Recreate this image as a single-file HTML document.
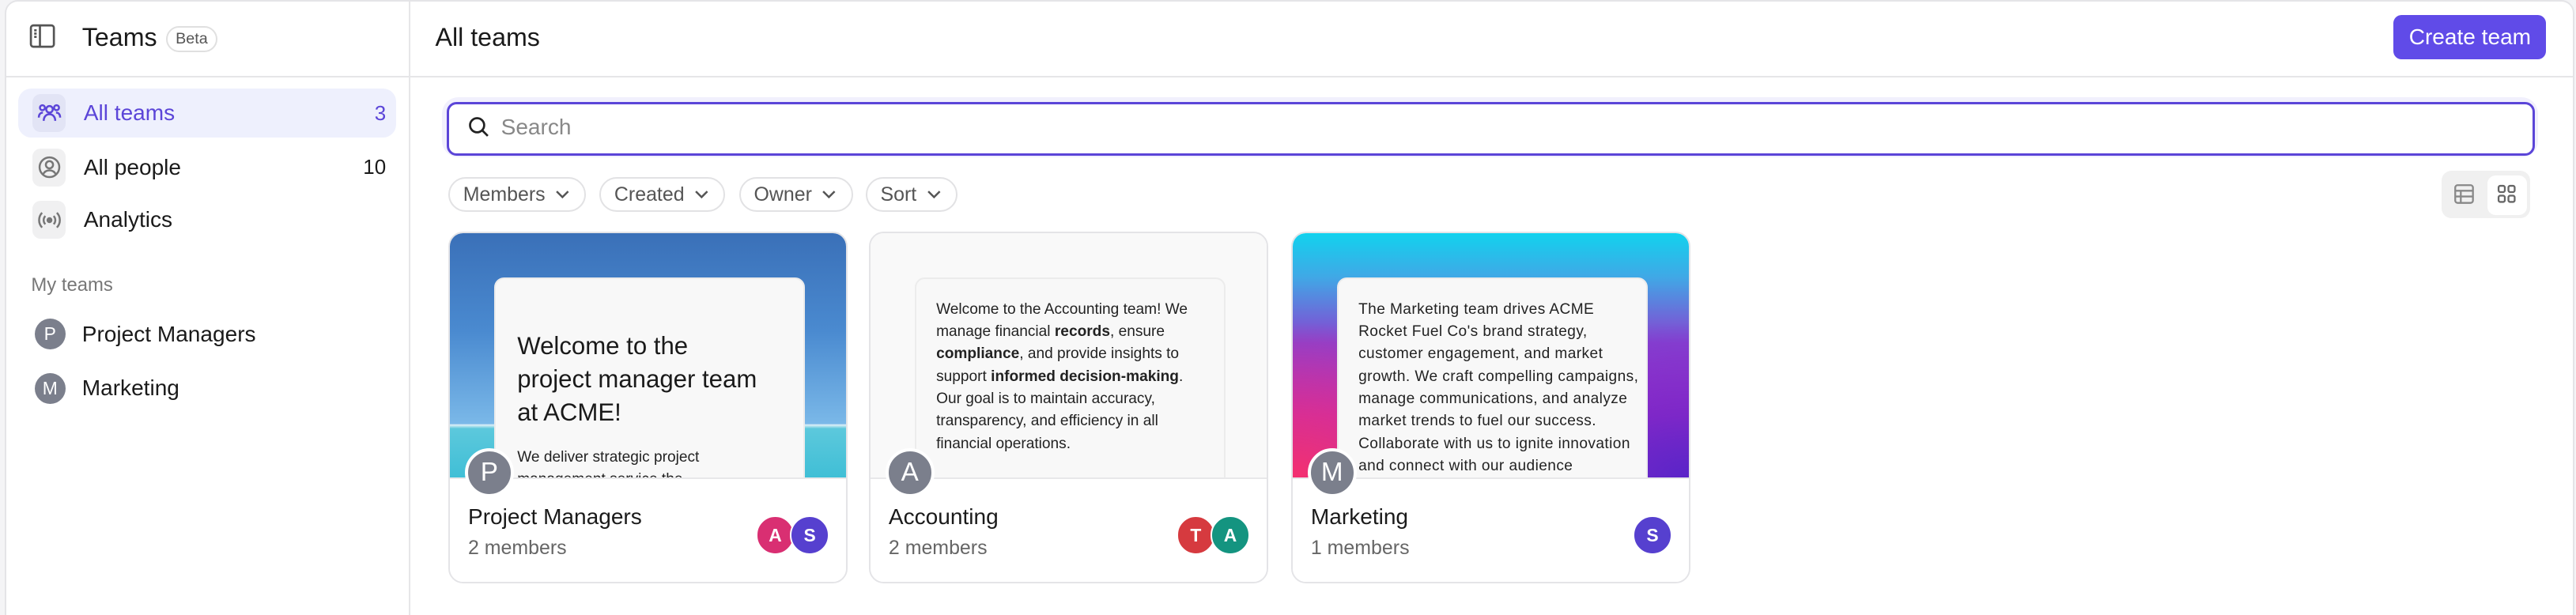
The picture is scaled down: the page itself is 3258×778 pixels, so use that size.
<!DOCTYPE html>
<html><head><meta charset="utf-8"><style>
html,body{margin:0;padding:0;background:#f4f4f6;overflow:hidden}
body{width:3258px;height:778px}
#w{zoom:2.0778;width:1568px;height:375px;position:relative;font-family:"Liberation Sans",sans-serif;color:#1a1a1a}
.frame{position:absolute;left:3px;top:0;width:1562px;height:380px;background:#fff;border:1px solid #e4e4e7;border-radius:8px;overflow:hidden}
.abs{position:absolute}
.hline{position:absolute;left:0;right:0;top:45px;height:1px;background:#e6e6e8}
.vline{position:absolute;left:245px;top:0;bottom:0;width:1px;background:#e6e6e8}
.nav{position:absolute;left:7px;width:230px;height:30px;border-radius:8px;display:flex;align-items:center;font-size:13.5px}
.nav .ic{width:20px;height:23px;border-radius:5px;background:#f0f0f1;margin-left:9px;margin-right:11px;display:flex;align-items:center;justify-content:center}
.nav .n{position:absolute;right:6px;font-size:12.5px}
.my{position:absolute;left:15px;display:flex;align-items:center;font-size:13.5px}
.av{border-radius:50%;background:#7b7f8c;color:#fff;display:flex;align-items:center;justify-content:center;font-size:11px}
.chip{position:absolute;top:107px;height:21px;border:1px solid #e2e2e4;border-radius:11px;font-size:12px;color:#555;display:flex;align-items:center;padding:0 9px 0 8px;box-sizing:border-box}
.chip svg{margin-left:6px}
.card{position:absolute;top:140px;width:243px;height:214px;border:1px solid #e4e4e7;border-radius:9px;overflow:hidden;background:#fff;box-sizing:border-box}
.img{position:absolute;left:0;top:0;right:0;height:149px;overflow:hidden}
.panel{position:absolute;top:27px;width:189px;height:140px;background:#f8f8f8;border-radius:6px;border:1px solid #ececec;box-sizing:border-box}
.bot{position:absolute;left:0;right:0;top:149px;bottom:0;border-top:1px solid #e8e8ea;background:#fff}
.big{position:absolute;left:9px;top:131px;width:26px;height:26px;border:2px solid #fff;font-size:16px}
.title{position:absolute;left:11px;top:165px;font-size:13.5px}
.sub{position:absolute;left:11px;top:185px;font-size:12px;color:#666}
.sm{position:absolute;top:172px;width:22px;height:22px;font-size:11px;font-weight:bold;border:1px solid #fff}
.pt{font-size:9.2px;line-height:13.6px;color:#222;position:absolute;left:12px;top:12px;right:8px}
</style></head><body><div id="w">
<div class="frame">
<div class="hline"></div><div class="vline"></div>
<svg class="abs" style="left:14px;top:13px" width="16" height="16" viewBox="0 0 16 16" fill="none" stroke="#555" stroke-width="1.3"><rect x="1" y="1.5" width="14" height="13" rx="1.5"/><line x1="6.5" y1="1.5" x2="6.5" y2="14.5"/><line x1="3" y1="4.5" x2="4.5" y2="4.5"/><line x1="3" y1="6.5" x2="4.5" y2="6.5"/><line x1="3" y1="8.5" x2="4.5" y2="8.5"/></svg>
<div class="abs" style="left:46px;top:13px;font-size:15.5px">Teams</div>
<div class="abs" style="left:97px;top:15px;height:14px;padding:0 5px;border:1px solid #e0e0e0;border-radius:8px;font-size:9.5px;color:#555;line-height:14px">Beta</div>
<div class="abs" style="left:261px;top:13px;font-size:15.5px">All teams</div>
<div class="abs" style="left:1453px;top:8px;width:93px;height:27px;background:#604be8;border-radius:5px;color:#fff;font-size:13.5px;display:flex;align-items:center;justify-content:center">Create team</div>

<div class="nav" style="top:53px;background:#eef0fd;color:#5b45d8"><div class="ic" style="background:#e2e4f5"><svg width="15" height="13" viewBox="0 0 15 13" fill="none" stroke="#5b45d8" stroke-width="1.2"><circle cx="7.5" cy="4" r="2"/><circle cx="3.2" cy="3" r="1.5"/><circle cx="11.8" cy="3" r="1.5"/><path d="M4 11c0-2.5 1.5-4 3.5-4s3.5 1.5 3.5 4"/><path d="M1 9c0-2 1-3 2.5-3M14 9c0-2-1-3-2.5-3"/></svg></div>All teams<span class="n">3</span></div>
<div class="nav" style="top:86px"><div class="ic"><svg width="14" height="14" viewBox="0 0 14 14" fill="none" stroke="#777" stroke-width="1.2"><circle cx="7" cy="7" r="6"/><circle cx="7" cy="5.5" r="2.2"/><path d="M3 11.5c1-2 2.3-2.6 4-2.6s3 .6 4 2.6"/></svg></div>All people<span class="n">10</span></div>
<div class="nav" style="top:118px"><div class="ic"><svg width="15" height="12" viewBox="0 0 15 12" fill="none" stroke="#777" stroke-width="1.2"><circle cx="7.5" cy="6" r="1.2" fill="#777"/><path d="M5 3.5a3.5 3.5 0 0 0 0 5M10 3.5a3.5 3.5 0 0 1 0 5M3 1.5a6.5 6.5 0 0 0 0 9M12 1.5a6.5 6.5 0 0 1 0 9"/></svg></div>Analytics</div>
<div class="abs" style="left:15px;top:166px;font-size:11.5px;color:#777">My teams</div>
<div class="my" style="top:193px"><div class="av" style="width:19px;height:19px;margin-right:10px;margin-left:2px">P</div>Project Managers</div>
<div class="my" style="top:226px"><div class="av" style="width:19px;height:19px;margin-right:10px;margin-left:2px">M</div>Marketing</div>

<div class="abs" style="left:265px;top:58px;width:1276px;height:37px;background:#f1f0fd;border-radius:10px"></div>
<div class="abs" style="left:268px;top:61px;width:1268px;height:30px;border:1.5px solid #5b45d8;border-radius:6px;background:#fff"></div>
<svg class="abs" style="left:281px;top:70px" width="13" height="13" viewBox="0 0 13 13" fill="none" stroke="#222" stroke-width="1.3"><circle cx="5.5" cy="5.5" r="4.3"/><line x1="8.6" y1="8.6" x2="12" y2="12"/></svg>
<div class="abs" style="left:301px;top:69px;font-size:13.5px;color:#888">Search</div>

<div class="chip" style="left:269px">Members<svg width="9" height="6" viewBox="0 0 9 6" fill="none" stroke="#555" stroke-width="1.2"><path d="M1 1l3.5 3.5L8 1"/></svg></div>
<div class="chip" style="left:361px">Created<svg width="9" height="6" viewBox="0 0 9 6" fill="none" stroke="#555" stroke-width="1.2"><path d="M1 1l3.5 3.5L8 1"/></svg></div>
<div class="chip" style="left:446px">Owner<svg width="9" height="6" viewBox="0 0 9 6" fill="none" stroke="#555" stroke-width="1.2"><path d="M1 1l3.5 3.5L8 1"/></svg></div>
<div class="chip" style="left:523px">Sort<svg width="9" height="6" viewBox="0 0 9 6" fill="none" stroke="#555" stroke-width="1.2"><path d="M1 1l3.5 3.5L8 1"/></svg></div>

<div class="abs" style="left:1482px;top:103px;width:54px;height:29px;background:#f0f0f0;border-radius:6px"></div>
<div class="abs" style="left:1510px;top:106px;width:24px;height:24px;background:#fff;border-radius:5px"></div>
<svg class="abs" style="left:1490px;top:111px" width="12" height="12" viewBox="0 0 12 12" fill="none" stroke="#888" stroke-width="1.1"><rect x="0.6" y="0.6" width="10.8" height="10.8" rx="1.5"/><line x1="0.6" y1="4" x2="11.4" y2="4"/><line x1="0.6" y1="7.5" x2="11.4" y2="7.5"/><line x1="4" y1="4" x2="4" y2="11.4"/></svg>
<svg class="abs" style="left:1516px;top:111px" width="12" height="12" viewBox="0 0 12 12" fill="none" stroke="#666" stroke-width="1.1"><rect x="1" y="1" width="3.8" height="3.8" rx="1"/><rect x="7" y="1" width="3.8" height="3.8" rx="1"/><rect x="1" y="7" width="3.8" height="3.8" rx="1"/><rect x="7" y="7" width="3.8" height="3.8" rx="1"/></svg>

<!-- card 1 -->
<div class="card" style="left:269px">
<div class="img" style="background:linear-gradient(180deg,#3a70b8 0%,#4a8ad0 40%,#7ab8e8 78%,#dff0f8 78.5%,#5cc8dc 80%,#40bfd6 100%)">
<div class="panel" style="left:27px;height:130px"><div style="position:absolute;left:13px;top:31px;font-size:15px;line-height:20px;width:150px">Welcome to the project manager team at ACME!</div><div class="pt" style="top:102px;left:13px">We deliver strategic project management service the</div></div></div>
<div class="bot"></div>
<div class="av big">P</div>
<div class="title">Project Managers</div><div class="sub">2 members</div>
<div class="av sm" style="left:186px;background:#d92f72">A</div><div class="av sm" style="left:207px;background:#5640cf">S</div>
</div>

<!-- card 2 -->
<div class="card" style="left:525px;background:#f9f9f9">
<div class="img" style="background:#f9f9f9"><div class="panel" style="left:27px;height:130px"><div class="pt" style="left:12px;top:12px">Welcome to the Accounting team! We manage financial <b>records</b>, ensure <b>compliance</b>, and provide insights to support <b>informed decision-making</b>. Our goal is to maintain accuracy, transparency, and efficiency in all financial operations.</div></div></div>
<div class="bot"></div>
<div class="av big">A</div>
<div class="title">Accounting</div><div class="sub">2 members</div>
<div class="av sm" style="left:186px;background:#d63a3f">T</div><div class="av sm" style="left:207px;background:#149480">A</div>
</div>

<!-- card 3 -->
<div class="card" style="left:782px">
<div class="img" style="background:radial-gradient(ellipse at 100% 100%,#5a24c8 0%,rgba(90,36,200,0) 45%),radial-gradient(ellipse at 0% 100%,#f5306f 0%,rgba(245,48,111,0) 45%),linear-gradient(180deg,#12d2ee 0%,#40a8e6 18%,#8a40d0 45%,#b02cc8 75%,#a030c8 100%)">
<div class="panel" style="left:27px;height:130px"><div class="pt" style="left:12px;top:12px;right:4px;letter-spacing:.2px">The Marketing team drives ACME Rocket Fuel Co's brand strategy, customer engagement, and market growth. We craft compelling campaigns, manage communications, and analyze market trends to fuel our success. Collaborate with us to ignite innovation and connect with our audience</div></div></div>
<div class="bot"></div>
<div class="av big">M</div>
<div class="title">Marketing</div><div class="sub">1 members</div>
<div class="av sm" style="left:207px;background:#5640cf">S</div>
</div>
</div>
</div></body></html>
